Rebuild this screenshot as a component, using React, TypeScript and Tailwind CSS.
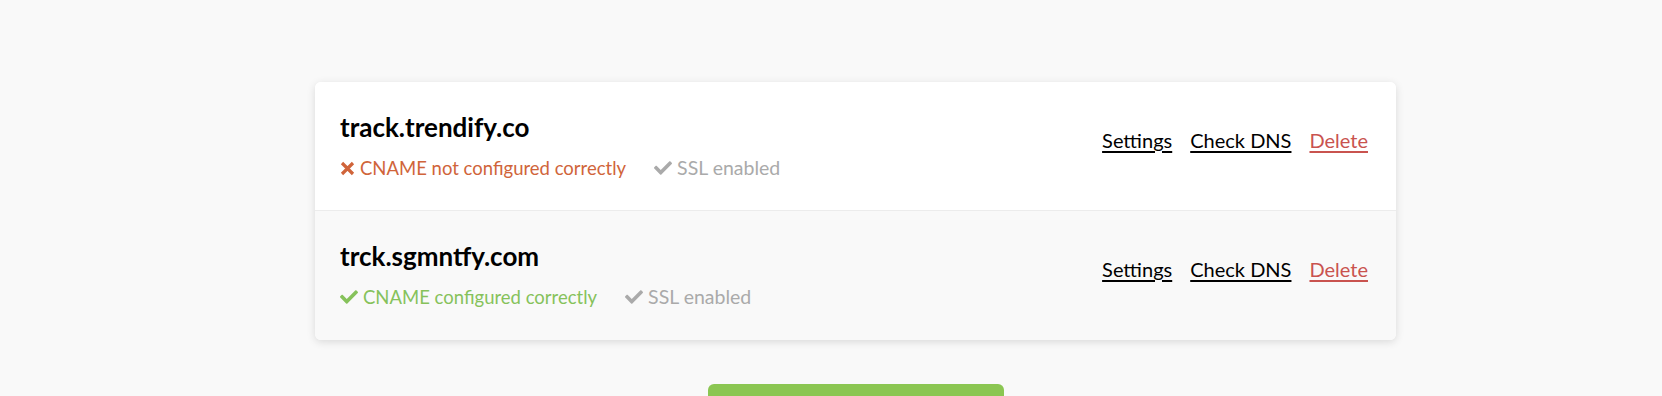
import React from 'react';
import { FaCheck } from 'react-icons/fa';

interface Domain {
  host: string;
  cnameOk: boolean;
}

const domains: Domain[] = [
  { host: 'track.trendify.co', cnameOk: false },
  { host: 'trck.sgmntfy.com', cnameOk: true },
];

const Cross = () => (
  <svg viewBox="0 0 15 15" className="w-[15px] h-[15px] mr-[5px]" fill="none">
    <path d="M2 2 L13 13 M13 2 L2 13" stroke="currentColor" strokeWidth="3.2" strokeLinecap="butt" />
  </svg>
);

const DomainRow: React.FC<{ domain: Domain; shaded: boolean }> = ({ domain, shaded }) => (
  <div
    className={`flex items-center justify-between pl-[25px] pr-[28px] pt-[29px] ${
      shaded ? 'bg-[#f9f9f9] pb-[30px]' : 'bg-white border-b border-[#ececec] pb-[29px]'
    }`}
  >
    <div>
      <div className="text-[26px] leading-[33px] font-bold text-black">{domain.host}</div>
      <div className="mt-[11px] flex items-center text-[18.5px] leading-[26px]">
        {domain.cnameOk ? (
          <span className="flex items-center text-[#86c25b]">
            <FaCheck className="w-[18px] h-[18px] mr-[5px]" />
            CNAME configured correctly
          </span>
        ) : (
          <span className="flex items-center text-[#d0643a]">
            <Cross />
            CNAME not configured correctly
          </span>
        )}
        <span className="flex items-center text-[#aaaaaa] ml-[28px]">
          <FaCheck className="w-[18px] h-[18px] mr-[5px]" />
          <span className="text-[19.5px]">SSL enabled</span>
        </span>
      </div>
    </div>
    <div className="flex items-center gap-[18px] text-[20px] leading-[26px] mb-[12px]">
      <a href="#" className="text-black underline underline-offset-[3px]">Settings</a>
      <a href="#" className="text-black underline underline-offset-[3px]">Check DNS</a>
      <a href="#" className="text-[#c9534f] underline underline-offset-[3px]">Delete</a>
    </div>
  </div>
);

const App: React.FC = () => {
  return (
    <div className="min-h-screen bg-[#f9f9f9] pl-[49px] pt-[82px] font-['Lato',sans-serif]">
      <div className="flex flex-col items-center">
        <div className="w-[1081px] rounded-[6px] bg-white shadow-[0_2px_8px_rgba(0,0,0,0.13)] overflow-hidden">
          {domains.map((d, i) => (
            <DomainRow key={d.host} domain={d} shaded={i % 2 === 1} />
          ))}
        </div>
        <button className="mt-[44px] w-[296px] h-[72px] rounded-[6px] bg-[#8bc652] text-white text-[18px] font-bold">
          Add custom domain
        </button>
      </div>
    </div>
  );
};

export default App;
